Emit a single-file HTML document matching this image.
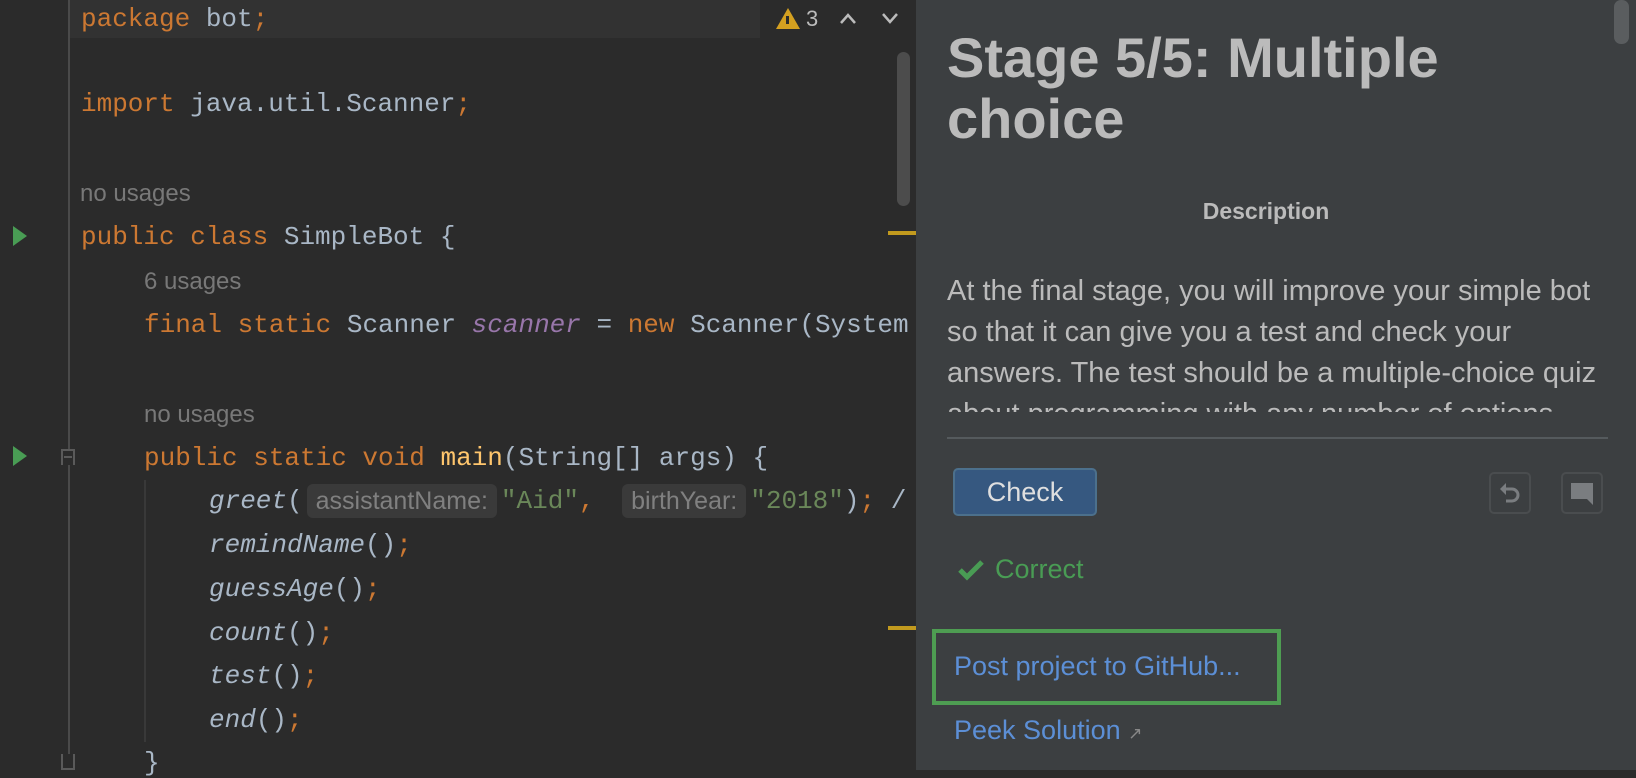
<!DOCTYPE html>
<html><head><style>
*{margin:0;padding:0;box-sizing:border-box}
body{width:1636px;height:770px;overflow:hidden;background:#2b2b2b;position:relative;font-family:"Liberation Sans",sans-serif}
.ed{position:absolute;left:0;top:0;width:916px;height:770px;background:#2b2b2b}
.top{position:absolute;left:70px;top:0;width:690px;height:38px;background:#323232}
.gl{position:absolute;left:68px;top:0;width:2px;height:770px;background:#4a4a4a}
.ln{position:absolute;font-family:"Liberation Mono",monospace;font-size:26px;color:#a9b7c6;white-space:pre;line-height:30px}
.k{color:#cc7832}.s{color:#6a8759}.f{color:#ffc66d}.v{color:#9876aa;font-style:italic}.i{font-style:italic}
.hint{position:absolute;font-size:24px;color:#787878;font-family:"Liberation Sans",sans-serif}
.ih{display:inline-block;background:#3a3a3a;border-radius:6px;color:#808080;font-family:"Liberation Sans",sans-serif;font-size:25px;padding:0 9px;height:34px;line-height:34px;vertical-align:middle;margin:0 4px}
.run{position:absolute;left:13px;width:0;height:0;border-top:10px solid transparent;border-bottom:10px solid transparent;border-left:14px solid #499c54}
.rp{position:absolute;left:916px;top:0;width:720px;height:770px;background:#3c3f41;color:#bbbbbb}
</style></head><body>
<div class="ed">
<div class="top"></div>
<div class="gl"></div>
<div style="position:absolute;left:144px;top:480px;width:2px;height:262px;background:#393939"></div>
<div class="ln" style="left:81px;top:4px"><span class="k">package</span> bot<span class="k">;</span></div>
<div style="position:absolute;left:776px;top:8px;width:0;height:0;border-left:12px solid transparent;border-right:12px solid transparent;border-bottom:21px solid #d4a020"></div>
<div style="position:absolute;left:786px;top:16px;width:3px;height:8px;background:#2b2b2b"></div>
<div style="position:absolute;left:806px;top:6px;font-size:22px;color:#bbb">3</div>
<svg style="position:absolute;left:838px;top:10px" width="20" height="16" viewBox="0 0 20 16"><path d="M3 13 L10 5 L17 13" fill="none" stroke="#bbb" stroke-width="2.5"/></svg>
<svg style="position:absolute;left:880px;top:10px" width="20" height="16" viewBox="0 0 20 16"><path d="M3 4 L10 12 L17 4" fill="none" stroke="#bbb" stroke-width="2.5"/></svg>
<div style="position:absolute;left:897px;top:52px;width:13px;height:154px;border-radius:7px;background:#4c4c4c"></div>
<div style="position:absolute;left:888px;top:231px;width:28px;height:4px;background:#c29a1e"></div>
<div style="position:absolute;left:888px;top:626px;width:28px;height:4px;background:#c29a1e"></div>
<div class="ln" style="left:81px;top:89px"><span class="k">import</span> java.util.Scanner<span class="k">;</span></div>
<div class="hint" style="left:80px;top:180px">no usages</div>
<div class="run" style="top:226px"></div>
<div class="ln" style="left:81px;top:222px"><span class="k">public class</span> SimpleBot {</div>
<div class="hint" style="left:144px;top:268px">6 usages</div>
<div class="ln" style="left:144px;top:310px"><span class="k">final static</span> Scanner <span class="v">scanner</span> = <span class="k">new</span> Scanner(System</div>
<div class="hint" style="left:144px;top:401px">no usages</div>
<div class="run" style="top:446px"></div>
<div style="position:absolute;left:61px;top:449px;width:14px;height:16px;border:2px solid #5a5a5a;border-bottom:none;background:#2b2b2b"></div>
<div style="position:absolute;left:64px;top:456px;width:8px;height:2px;background:#5a5a5a"></div>
<div class="ln" style="left:144px;top:443px"><span class="k">public static void</span> <span class="f">main</span>(String[] args) {</div>
<div class="ln" style="left:209px;top:484px;line-height:34px"><span class="i">greet</span>(<span class="ih">assistantName:</span><span class="s">"Aid"</span><span class="k">,</span> <span class="ih" style="margin-left:12px">birthYear:</span><span class="s">"2018"</span>)<span class="k">;</span> /</div>
<div class="ln" style="left:209px;top:530px"><span class="i">remindName</span>()<span class="k">;</span></div>
<div class="ln" style="left:209px;top:574px"><span class="i">guessAge</span>()<span class="k">;</span></div>
<div class="ln" style="left:209px;top:618px"><span class="i">count</span>()<span class="k">;</span></div>
<div class="ln" style="left:209px;top:661px"><span class="i">test</span>()<span class="k">;</span></div>
<div class="ln" style="left:209px;top:705px"><span class="i">end</span>()<span class="k">;</span></div>
<div class="ln" style="left:144px;top:748px">}</div>
<div style="position:absolute;left:61px;top:754px;width:14px;height:16px;border:2px solid #5a5a5a;border-top:none;background:#2b2b2b"></div>
</div>
<div class="rp">
<div style="position:absolute;left:698px;top:0;width:15px;height:44px;border-radius:7px;background:#5a5d5f"></div>
<div style="position:absolute;left:31px;top:27px;font-size:56px;font-weight:bold;line-height:61px;color:#bbbbbb;width:600px">Stage 5/5: Multiple choice</div>
<div style="position:absolute;left:0;width:700px;top:198px;text-align:center;font-size:23px;font-weight:bold">Description</div>
<div style="position:absolute;left:31px;top:271px;width:665px;height:141px;overflow:hidden;font-size:29px;line-height:41px">At the final stage, you will improve your simple bot so that it can give you a test and check your answers. The test should be a multiple-choice quiz about programming with any number of options</div>
<div style="position:absolute;left:31px;top:437px;width:661px;height:2px;background:#555a5d"></div>
<div style="position:absolute;left:37px;top:468px;width:144px;height:48px;background:#365880;border:2px solid #4c708c;border-radius:5px;color:#dfdfdf;font-size:27px;text-align:center;line-height:44px">Check</div>
<div style="position:absolute;left:573px;top:472px;width:42px;height:42px;border:2px solid #4a4d4f;border-radius:5px"></div>
<svg style="position:absolute;left:581px;top:480px" width="26" height="26" viewBox="0 0 26 26"><path d="M7 9 H15 A6 6 0 0 1 15 21 H9" fill="none" stroke="#7a7d80" stroke-width="3"/><path d="M3 9 L9 3 L9 15 Z" fill="#7a7d80"/></svg>
<div style="position:absolute;left:645px;top:472px;width:42px;height:42px;border:2px solid #4a4d4f;border-radius:5px"></div>
<svg style="position:absolute;left:653px;top:481px" width="26" height="26" viewBox="0 0 26 26"><path d="M2 2 H24 V24 L18 18 H2 Z" fill="#7a7d80"/></svg>
<svg style="position:absolute;left:42px;top:559px" width="26" height="22" viewBox="0 0 26 22"><path d="M2 11 L9 18 L24 3" fill="none" stroke="#499c54" stroke-width="5"/></svg>
<div style="position:absolute;left:79px;top:554px;font-size:27px;color:#499c54">Correct</div>
<div style="position:absolute;left:16px;top:629px;width:349px;height:76px;border:4px solid #4e9d52"></div>
<div style="position:absolute;left:38px;top:651px;font-size:27px;color:#5c8fd6">Post project to GitHub...</div>
<div style="position:absolute;left:38px;top:715px;font-size:27px;color:#5c8fd6">Peek Solution <span style="font-size:17px;color:#888">&#8599;</span></div>
</div>
</body></html>
